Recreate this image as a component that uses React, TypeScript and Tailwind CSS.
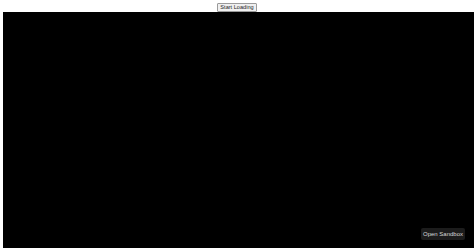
export default function App() {
  return (
    <div className="relative h-[248px] w-full overflow-hidden bg-white font-['Liberation_Sans',Arial,sans-serif]">
      <div className="flex justify-center pt-[3px]">
        <button className="h-[9px] rounded-[1px] border border-[#9a9a9a] bg-[#f0f0f0] px-[2px] text-[5.6px] leading-[7px] whitespace-nowrap text-[#222]">
          Start Loading
        </button>
      </div>
      <div className="relative ml-[3px] h-[236px] bg-black">
        <button className="absolute bottom-[8px] right-[9px] h-[12px] w-[44px] rounded-[2px] bg-[#1c1c1c] text-[6px] leading-[12px] whitespace-nowrap text-[#d8d8d8]">
          Open Sandbox
        </button>
      </div>
    </div>
  );
}
